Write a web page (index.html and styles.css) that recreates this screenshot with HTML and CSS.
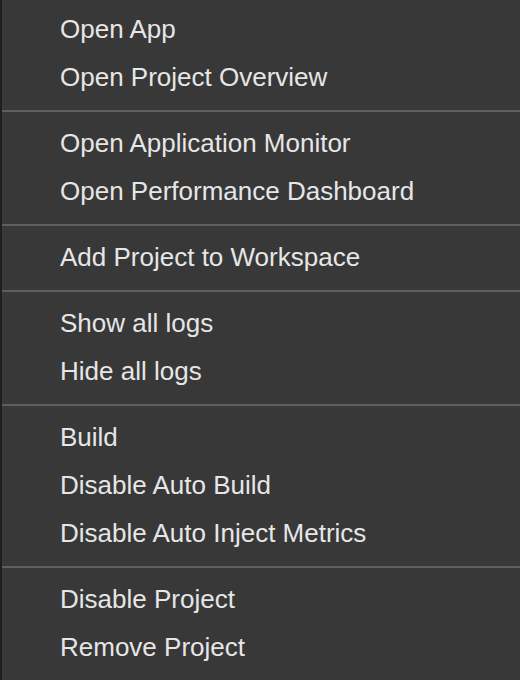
FILE: index.html
```html
<!DOCTYPE html>
<html>
<head>
<meta charset="utf-8">
<link rel="stylesheet" href="styles.css">
</head>
<body>
<div class="menu">
  <div class="item">Open App</div>
  <div class="item">Open Project Overview</div>
  <div class="sep"></div>
  <div class="item">Open Application Monitor</div>
  <div class="item">Open Performance Dashboard</div>
  <div class="sep"></div>
  <div class="item">Add Project to Workspace</div>
  <div class="sep"></div>
  <div class="item">Show all logs</div>
  <div class="item">Hide all logs</div>
  <div class="sep"></div>
  <div class="item">Build</div>
  <div class="item">Disable Auto Build</div>
  <div class="item">Disable Auto Inject Metrics</div>
  <div class="sep"></div>
  <div class="item">Disable Project</div>
  <div class="item">Remove Project</div>
</div>
</body>
</html>
```
FILE: styles.css
```css
html, body {
  margin: 0;
  padding: 0;
  background: #383838;
  height: 100%;
}
.menu {
  box-sizing: border-box;
  min-height: 680px;
  background: #383838;
  border-left: 2px solid #1f1f1f;
  padding-top: 5px;
  font-family: "Liberation Sans", Arial, sans-serif;
  font-size: 26px;
  color: #e6e6e6;
}
.item {
  height: 48px;
  line-height: 48px;
  padding-left: 58px;
  white-space: nowrap;
}
.sep {
  height: 2px;
  background: #5f5f5f;
  margin: 9px 0 7px;
}
```
